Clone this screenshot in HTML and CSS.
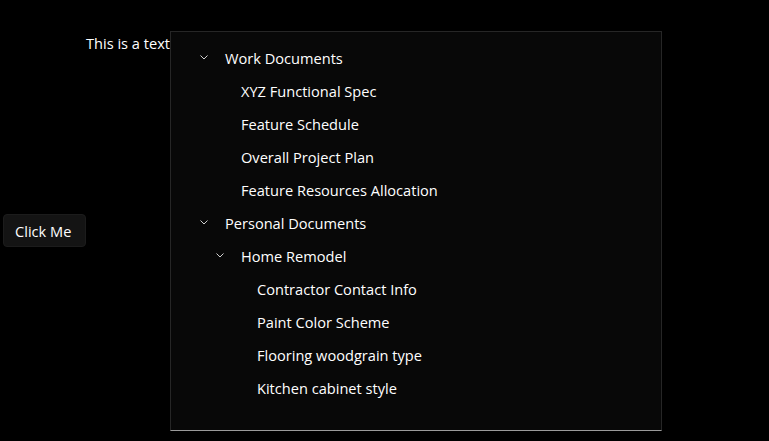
FILE: index.html
```html
<!DOCTYPE html>
<html lang="en">
<head>
<meta charset="utf-8">
<title>TreeView</title>
<link rel="stylesheet" href="styles.css">
</head>
<body>
<div class="page">
  <div class="header">
    <span class="label">This is a text</span>
    <span class="label">Unknown</span>
  </div>
  <div class="button-row">
    <button class="btn" type="button">Click Me</button>
  </div>
  <div class="tree">
    <div class="row lvl0"><span class="chev"><svg width="8" height="5" viewBox="0 0 8 5"><path d="M0.5 0.5 L4 4 L7.5 0.5" fill="none" stroke="#d0d0d0" stroke-width="1"/></svg></span><span class="txt">Work Documents</span></div>
    <div class="row lvl1"><span class="chev"></span><span class="txt">XYZ Functional Spec</span></div>
    <div class="row lvl1"><span class="chev"></span><span class="txt">Feature Schedule</span></div>
    <div class="row lvl1"><span class="chev"></span><span class="txt">Overall Project Plan</span></div>
    <div class="row lvl1"><span class="chev"></span><span class="txt">Feature Resources Allocation</span></div>
    <div class="row lvl0"><span class="chev"><svg width="8" height="5" viewBox="0 0 8 5"><path d="M0.5 0.5 L4 4 L7.5 0.5" fill="none" stroke="#d0d0d0" stroke-width="1"/></svg></span><span class="txt">Personal Documents</span></div>
    <div class="row lvl1"><span class="chev"><svg width="8" height="5" viewBox="0 0 8 5"><path d="M0.5 0.5 L4 4 L7.5 0.5" fill="none" stroke="#d0d0d0" stroke-width="1"/></svg></span><span class="txt">Home Remodel</span></div>
    <div class="row lvl2"><span class="chev"></span><span class="txt">Contractor Contact Info</span></div>
    <div class="row lvl2"><span class="chev"></span><span class="txt">Paint Color Scheme</span></div>
    <div class="row lvl2"><span class="chev"></span><span class="txt">Flooring woodgrain type</span></div>
    <div class="row lvl2"><span class="chev"></span><span class="txt">Kitchen cabinet style</span></div>
  </div>
</div>
</body>
</html>
```
FILE: styles.css
```css
html, body {
  margin: 0;
  padding: 0;
  background: #000;
}
body {
  font-family: "Open Sans", "Noto Sans", sans-serif;
  font-size: 14.6px;
  color: #fff;
}
.page {
  position: relative;
  width: 769px;
  height: 441px;
  overflow: hidden;
}
.header {
  display: grid;
  grid-template-columns: 440px auto;
  padding: 33px 0 0 86px;
  line-height: 20px;
}
.button-row {
  padding: 161px 0 0 3px;
}
.btn {
  font-family: inherit;
  font-size: 14.6px;
  color: #fff;
  background: #141414;
  border: 1px solid #1c1c1c;
  border-radius: 4px;
  height: 33px;
  width: 83px;
  text-align: left;
  padding: 0 0 0 11px;
  line-height: 20px;
}
.tree {
  position: absolute;
  left: 170px;
  top: 31px;
  width: 492px;
  height: 400px;
  border: 1px solid #262626;
  border-bottom-color: #9a9a9a;
  background: #080808;
  padding-top: 9px;
  box-sizing: border-box;
}
.row {
  display: flex;
  align-items: center;
  height: 33px;
  line-height: 20px;
}
.lvl0 { padding-left: 24px; }
.lvl1 { padding-left: 40px; }
.lvl2 { padding-left: 56px; }
.chev {
  width: 18px;
  margin-right: 12px;
  display: flex;
  justify-content: center;
  align-items: center;
}
.tree .txt {
  white-space: nowrap;
}
```
